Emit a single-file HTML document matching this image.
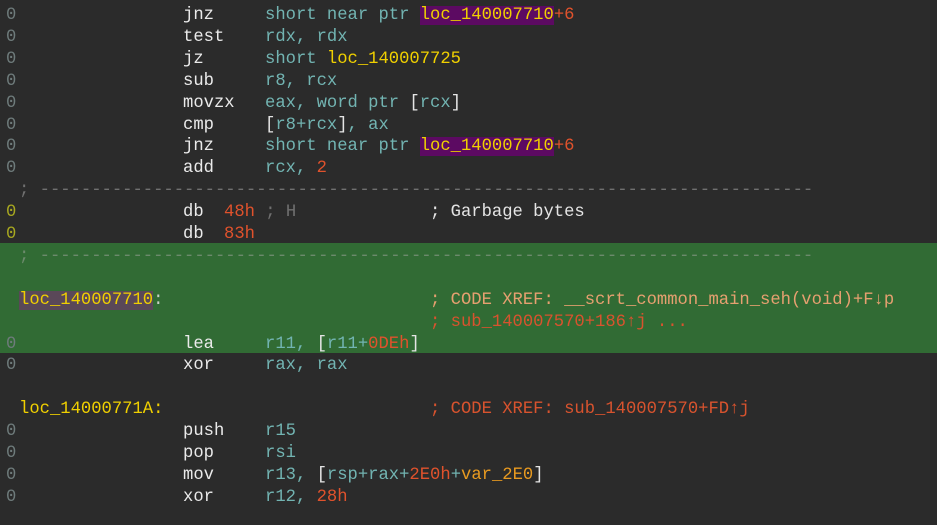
<!DOCTYPE html>
<html><head><meta charset="utf-8"><style>
body{margin:0;width:937px;height:521px;overflow:hidden;background:#2b2b2b;font-family:"Liberation Mono",monospace;font-size:17.2px;position:relative}
.g{position:absolute;left:0;top:243px;width:937px;height:110px;background:#316b34}
.wrap{position:absolute;left:0;top:4px;width:937px;height:521px}
.l{position:absolute;left:0;height:22px;line-height:22px;white-space:pre;width:937px}
.n{position:absolute;left:6px;color:#6e7b7b}
.y0{color:#a8a820}
.m{position:absolute;left:183px;color:#eaeaea}
.o{position:absolute;left:265px;color:#72b4b2}
.c{position:absolute;left:430px}
.w{color:#e4e4e4}.r{color:#e0522c}.lb{color:#f0d000}.gr{color:#707070}
.p{background:#5c0a62;color:#f0d000}
.or{color:#e6a070}.cr{color:#d8532e}
.d{position:absolute;left:19px;color:#707070}
.lab{position:absolute;left:19px}
.lg{background:#5a4858;color:#f0d000}
</style></head><body>
<div class="g"></div>
<div class="wrap">
<div class="l" style="top:1px"><span class="n">0</span><span class="m">jnz</span><span class="o">short near ptr <span class="p">loc_140007710</span><span class="r">+6</span></span></div>
<div class="l" style="top:23px"><span class="n">0</span><span class="m">test</span><span class="o">rdx, rdx</span></div>
<div class="l" style="top:44.8px"><span class="n">0</span><span class="m">jz</span><span class="o">short <span class="lb">loc_140007725</span></span></div>
<div class="l" style="top:66.7px"><span class="n">0</span><span class="m">sub</span><span class="o">r8, rcx</span></div>
<div class="l" style="top:88.6px"><span class="n">0</span><span class="m">movzx</span><span class="o">eax, word ptr <span class="w">[</span>rcx<span class="w">]</span></span></div>
<div class="l" style="top:110.5px"><span class="n">0</span><span class="m">cmp</span><span class="o"><span class="w">[</span>r8+rcx<span class="w">]</span>, ax</span></div>
<div class="l" style="top:132.4px"><span class="n">0</span><span class="m">jnz</span><span class="o">short near ptr <span class="p">loc_140007710</span><span class="r">+6</span></span></div>
<div class="l" style="top:154.3px"><span class="n">0</span><span class="m">add</span><span class="o">rcx, <span class="r">2</span></span></div>
<div class="l" style="top:176.2px"><span class="d">; ---------------------------------------------------------------------------</span></div>
<div class="l" style="top:198.1px"><span class="n y0">0</span><span class="m">db</span><span class="o" style="left:224px"><span class="r">48h</span><span class="gr"> ; H</span></span><span class="c w">; Garbage bytes</span></div>
<div class="l" style="top:220px"><span class="n y0">0</span><span class="m">db</span><span class="o" style="left:224px"><span class="r">83h</span></span></div>
<div class="l" style="top:241.9px"><span class="d" style="color:#6c8a6c">; ---------------------------------------------------------------------------</span></div>
<div class="l" style="top:285.7px"><span class="lab"><span class="lg">loc_140007710</span><span style="color:#c8d0c8">:</span></span><span class="c or">; CODE XREF: __scrt_common_main_seh(void)+F↓p</span></div>
<div class="l" style="top:307.6px"><span class="c cr">; sub_140007570+186↑j ...</span></div>
<div class="l" style="top:329.5px"><span class="n">0</span><span class="m">lea</span><span class="o">r11, <span class="w">[</span>r11+<span class="r">0DEh</span><span class="w">]</span></span></div>
<div class="l" style="top:351.4px"><span class="n">0</span><span class="m">xor</span><span class="o">rax, rax</span></div>
<div class="l" style="top:395.2px"><span class="lab lb">loc_14000771A:</span><span class="c cr">; CODE XREF: sub_140007570+FD↑j</span></div>
<div class="l" style="top:417.1px"><span class="n">0</span><span class="m">push</span><span class="o">r15</span></div>
<div class="l" style="top:439px"><span class="n">0</span><span class="m">pop</span><span class="o">rsi</span></div>
<div class="l" style="top:460.9px"><span class="n">0</span><span class="m">mov</span><span class="o">r13, <span class="w">[</span>rsp+rax+<span class="r">2E0h</span>+<span style="color:#e89a20">var_2E0</span><span class="w">]</span></span></div>
<div class="l" style="top:482.8px"><span class="n">0</span><span class="m">xor</span><span class="o">r12, <span class="r">28h</span></span></div>
</div>
</body></html>
